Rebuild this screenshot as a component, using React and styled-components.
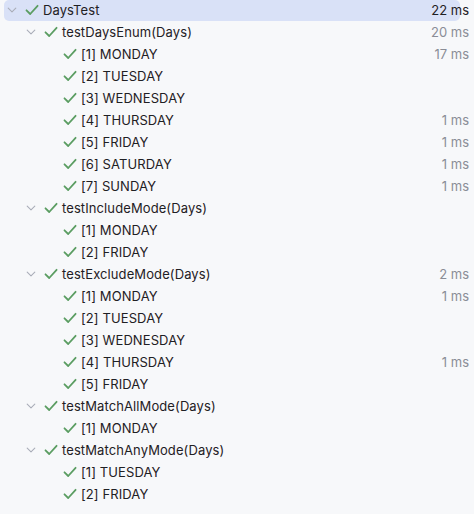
import React from "react";
import styled, { createGlobalStyle } from "styled-components";

const Global = createGlobalStyle`
  html, body { margin: 0; padding: 0; background: #ffffff; }
  body { font-family: Inter, "Noto Sans", sans-serif; -webkit-font-smoothing: antialiased; }
`;

const Panel = styled.div`
  width: 474px;
  height: 514px;
  background: #f7f8fa;
  overflow: hidden;
  padding: 0 4px;
  box-sizing: border-box;
`;

const Row = styled.div`
  display: flex;
  align-items: center;
  height: 22px;
  box-sizing: border-box;
  padding-bottom: 2px;
  padding-left: ${(p) => p.$depth * 19}px;
  width: 456px;
  position: relative;
  &::before {
    content: "";
    display: ${(p) => (p.$selected ? "block" : "none")};
    position: absolute;
    left: 0;
    right: 0;
    top: 0;
    height: 21px;
    border-radius: 5px;
    background: #d9e1f7;
    z-index: 0;
  }
  > * { position: relative; z-index: 1; }
`;

const Chevron = styled.span`
  width: 16px;
  height: 16px;
  display: flex;
  align-items: center;
  justify-content: center;
  flex-shrink: 0;
`;

const Check = styled.span`
  width: 16px;
  height: 16px;
  margin-left: 4px;
  margin-right: 3px;
  display: flex;
  align-items: center;
  justify-content: center;
  flex-shrink: 0;
`;

const Label = styled.span`
  flex: 1;
  font-size: 13px;
  color: #1f2024;
  white-space: nowrap;
  letter-spacing: 0.1px;
`;

const Time = styled.span`
  font-size: 13px;
  color: ${(p) => (p.$selected ? "#1f2024" : "#8a8d96")};
  margin-right: -9px;
  white-space: nowrap;
`;

const ChevronIcon = () => (
  <svg width="10" height="6" viewBox="0 0 10 6">
    <path d="M1.2 1.2 L5 4.8 L8.8 1.2" fill="none" stroke="#a9adb8" strokeWidth="1.1" strokeLinecap="round" strokeLinejoin="round" />
  </svg>
);

const CheckIcon = () => (
  <svg width="14" height="12" viewBox="0 0 14 12">
    <path d="M1.5 6.3 L5.2 10 L12.6 1.8" fill="none" stroke="#5b9d62" strokeWidth="1.8" strokeLinecap="round" strokeLinejoin="round" />
  </svg>
);

const data = [
  { d: 0, t: "DaysTest", ms: "22 ms", open: true, sel: true },
  { d: 1, t: "testDaysEnum(Days)", ms: "20 ms", open: true },
  { d: 2, t: "[1] MONDAY", ms: "17 ms" },
  { d: 2, t: "[2] TUESDAY" },
  { d: 2, t: "[3] WEDNESDAY" },
  { d: 2, t: "[4] THURSDAY", ms: "1 ms" },
  { d: 2, t: "[5] FRIDAY", ms: "1 ms" },
  { d: 2, t: "[6] SATURDAY", ms: "1 ms" },
  { d: 2, t: "[7] SUNDAY", ms: "1 ms" },
  { d: 1, t: "testIncludeMode(Days)", open: true },
  { d: 2, t: "[1] MONDAY" },
  { d: 2, t: "[2] FRIDAY" },
  { d: 1, t: "testExcludeMode(Days)", ms: "2 ms", open: true },
  { d: 2, t: "[1] MONDAY", ms: "1 ms" },
  { d: 2, t: "[2] TUESDAY" },
  { d: 2, t: "[3] WEDNESDAY" },
  { d: 2, t: "[4] THURSDAY", ms: "1 ms" },
  { d: 2, t: "[5] FRIDAY" },
  { d: 1, t: "testMatchAllMode(Days)", open: true },
  { d: 2, t: "[1] MONDAY" },
  { d: 1, t: "testMatchAnyMode(Days)", open: true },
  { d: 2, t: "[1] TUESDAY" },
  { d: 2, t: "[2] FRIDAY" },
];

export default function App() {
  return (
    <>
      <Global />
      <Panel>
        {data.map((r, i) => (
          <Row key={i} $depth={r.d} $selected={r.sel}>
            <Chevron>{r.open ? <ChevronIcon /> : null}</Chevron>
            <Check><CheckIcon /></Check>
            <Label>{r.t}</Label>
            {r.ms ? <Time $selected={r.sel}>{r.ms}</Time> : null}
          </Row>
        ))}
      </Panel>
    </>
  );
}
